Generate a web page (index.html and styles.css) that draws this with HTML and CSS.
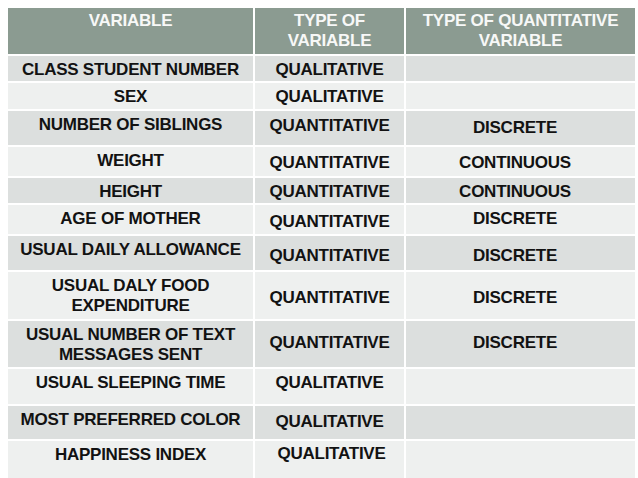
FILE: index.html
```html
<!DOCTYPE html>
<html>
<head>
<meta charset="utf-8">
<link rel="stylesheet" href="styles.css">
</head>
<body>
<div class="sheet">
  <div class="grid">
    <div class="c h">VARIABLE</div>
    <div class="c h">TYPE OF<br>VARIABLE</div>
    <div class="c h">TYPE OF QUANTITATIVE<br>VARIABLE</div>

    <div class="c d v">CLASS STUDENT NUMBER</div>
    <div class="c d p4">QUALITATIVE</div>
    <div class="c d k"></div>

    <div class="c l v">SEX</div>
    <div class="c l p4">QUALITATIVE</div>
    <div class="c l k"></div>

    <div class="c d v">NUMBER OF SIBLINGS</div>
    <div class="c d p5">QUANTITATIVE</div>
    <div class="c d k p7">DISCRETE</div>

    <div class="c l v">WEIGHT</div>
    <div class="c l p6">QUANTITATIVE</div>
    <div class="c l k p6">CONTINUOUS</div>

    <div class="c d v">HEIGHT</div>
    <div class="c d p4">QUANTITATIVE</div>
    <div class="c d k p4">CONTINUOUS</div>

    <div class="c l v">AGE OF MOTHER</div>
    <div class="c l p7">QUANTITATIVE</div>
    <div class="c l k p4">DISCRETE</div>

    <div class="c d v">USUAL DAILY ALLOWANCE</div>
    <div class="c d p10">QUANTITATIVE</div>
    <div class="c d k p10">DISCRETE</div>

    <div class="c l v">USUAL DALY FOOD<br>EXPENDITURE</div>
    <div class="c l p16">QUANTITATIVE</div>
    <div class="c l k p16">DISCRETE</div>

    <div class="c d v">USUAL NUMBER OF TEXT<br>MESSAGES SENT</div>
    <div class="c d p12">QUANTITATIVE</div>
    <div class="c d k p12">DISCRETE</div>

    <div class="c l v">USUAL SLEEPING TIME</div>
    <div class="c l p4">QUALITATIVE</div>
    <div class="c l k"></div>

    <div class="c d v">MOST PREFERRED COLOR</div>
    <div class="c d p6">QUALITATIVE</div>
    <div class="c d k"></div>

    <div class="c l v">HAPPINESS INDEX</div>
    <div class="c l p3 shift">QUALITATIVE</div>
    <div class="c l k"></div>
  </div>
</div>
</body>
</html>
```

FILE: styles.css
```css
html, body {
  margin: 0;
  padding: 0;
  background: #ffffff;
}

.sheet {
  padding: 8px 0 0 8px;
  height: 470px;
  overflow: hidden;
}

.grid {
  display: grid;
  grid-template-columns: 245px 149px 229px;
  grid-template-rows: 46px 25px 26px 34px 29px 25px 29px 34px 47px 46px 35px 33px 40px;
  gap: 2px;
  font-family: "Liberation Sans", Arial, sans-serif;
  font-weight: bold;
  font-size: 17px;
  letter-spacing: -0.25px;
  line-height: 20px;
  color: #121212;
}

.c {
  text-align: center;
  box-sizing: border-box;
  white-space: nowrap;
}

.h {
  background: #8b9b91;
  color: #f7f8f7;
  padding-top: 3px;
}

.d {
  background: #dcdfde;
}

.l {
  background: #eef0ef;
}

.v {
  padding-top: 4px;
}

.k {
  padding-right: 11px;
}

.shift {
  padding-left: 4px;
}

.p3 { padding-top: 3px; }
.p4 { padding-top: 4px; }
.p5 { padding-top: 5px; }
.p6 { padding-top: 6px; }
.p7 { padding-top: 7px; }
.p10 { padding-top: 10px; }
.p12 { padding-top: 12px; }
.p16 { padding-top: 16px; }
```
